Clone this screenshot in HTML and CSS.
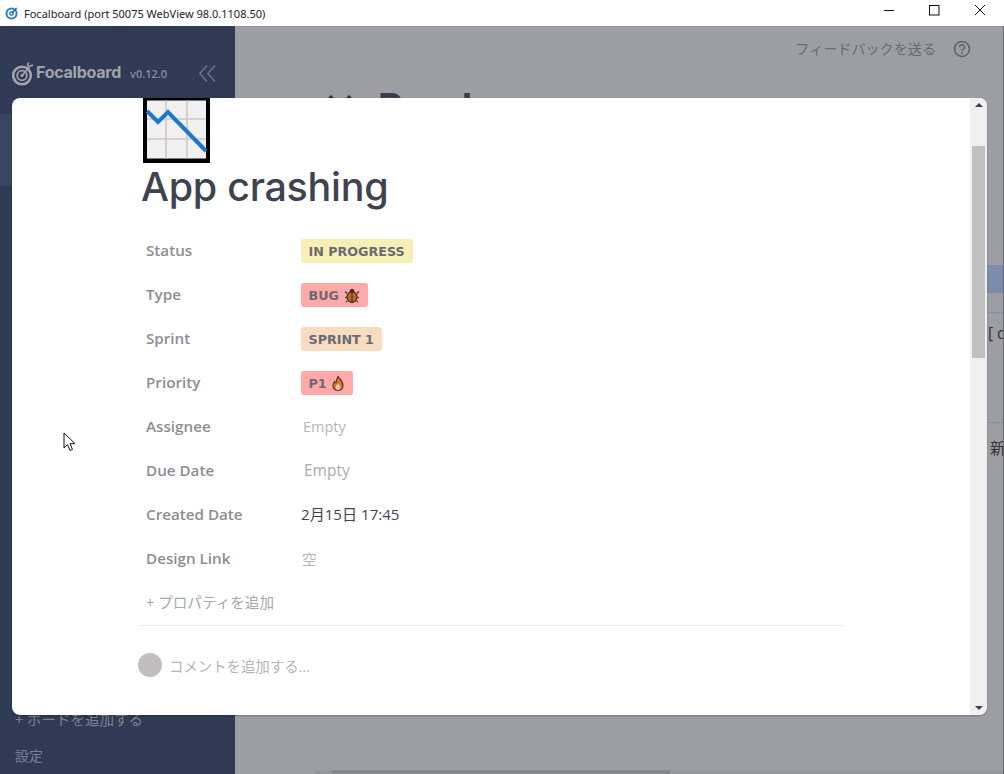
FILE: index.html
```html
<!DOCTYPE html>
<html lang="ja">
<head>
<meta charset="utf-8">
<title>Focalboard</title>
<link rel="stylesheet" href="styles.css">
</head>
<body>
<header class="titlebar">
  <svg class="app-icon" viewBox="0 0 15 15"><circle cx="7" cy="8" r="6.500" fill="#2f7fd0"/><circle cx="7" cy="8" r="4.300" fill="#fff"/><circle cx="7" cy="8" r="2.600" fill="#2f7fd0"/><circle cx="7" cy="8" r="1" fill="#fff"/><path d="M7.500 7.500 12.500 2" stroke="#1c5fa8" stroke-width="1.500"/></svg>
  <span class="title-text">Focalboard (port 50075 WebView 98.0.1108.50)</span>
  <div class="win-controls">
    <svg class="win-btn" viewBox="0 0 46 26"><path d="M18 10.500h10" stroke="#111" fill="none"/></svg>
    <svg class="win-btn" viewBox="0 0 46 26"><rect x="17.500" y="5.500" width="9.500" height="9.500" stroke="#111" fill="none"/></svg>
    <svg class="win-btn" viewBox="0 0 46 26"><path d="M17 5l10 10M27 5 17 15" stroke="#111" fill="none"/></svg>
  </div>
</header>
<div class="app">
  <aside class="sidebar">
    <div class="brand">
      <svg class="brand-icon" viewBox="0 0 21 25"><circle cx="10" cy="14.500" r="8.800" fill="none" stroke="#a3a3a7" stroke-width="2.600"/><circle cx="10" cy="14.500" r="4.800" fill="none" stroke="#a3a3a7" stroke-width="1.800"/><circle cx="10" cy="14.500" r="1.600" fill="#a3a3a7"/><path d="M10.500 14 18 5M15.500 5.500l1-4M18 5l3-1" stroke="#a3a3a7" stroke-width="1.800" fill="none"/></svg>
      <span class="brand-name">Focalboard</span>
      <span class="brand-version">v0.12.0</span>
      <svg class="collapse" viewBox="0 0 17 17"><path d="M8 .500 .8 8.500 8 16.500M16 .500 8.800 8.500 16 16.500" fill="none" stroke="#6d7282" stroke-width="1.500"/></svg>
    </div>
    <div class="side-selected"></div>
    <div class="side-footer">
      <div class="side-link add-board">+ ボードを追加する</div>
      <div class="side-link">設定</div>
    </div>
  </aside>
  <main class="content">
    <div class="topbar">
      <span class="feedback">フィードバックを送る</span>
      <svg class="help" viewBox="0 0 18 18"><circle cx="9" cy="9" r="7.500" fill="none" stroke="#5f616c" stroke-width="1.600"/><path d="M6.500 7.200a2.500 2.300 0 1 1 3.700 2c-.9.500-1.200 1-1.200 1.800" fill="none" stroke="#5f616c" stroke-width="1.500"/><circle cx="9" cy="13" r="1" fill="#5f616c"/></svg>
    </div>
    <div class="bg-head">
      <svg class="bg-icon" viewBox="0 0 32 32"><path d="M0 8 7 1l7 7 4 0 7-7 7 7v24H0z" fill="#2a2d3a"/></svg>
      <span class="bg-title">Roadmap</span>
    </div>
    <div class="bg-table">
      <div class="bg-row selected"></div>
      <div class="bg-row text-row">[ d</div>
      <div class="bg-row last-row">新</div>
    </div>
    <div class="bg-hscroll"><span class="bg-hthumb"></span></div>
  </main>
</div>
<section class="modal">
  <div class="modal-scroll">
    <div class="card">
      <svg class="card-icon" viewBox="0 0 67 65">
        <rect width="67" height="65" fill="#000"/>
        <rect x="4" y="2.500" width="59" height="58" fill="#f0f0f0"/>
        <path d="M23 2.500v58M44 2.500v58M4 21h59M4 41h59" stroke="#cfc8c8" stroke-width="1.600" fill="none"/>
        <path d="M4 13 15 24 25 14 63 53" stroke="#1b78d0" stroke-width="4" fill="none"/>
      </svg>
      <h1 class="card-title">App crashing</h1>
      <div class="props">
        <div class="prop"><span class="prop-name">Status</span><span class="badge yellow">IN PROGRESS</span></div>
        <div class="prop"><span class="prop-name">Type</span><span class="badge red">BUG
          <svg class="emoji" viewBox="0 0 16 16"><ellipse cx="8" cy="9.500" rx="5" ry="5.500" fill="#c8651d" stroke="#43302c" stroke-width="1.300"/><circle cx="8" cy="3.500" r="2.200" fill="#43302c"/><path d="M8 4v11M3 6 1 4M13 6l2-2M3 10H1M13 10h2M3.500 13 2 15M12.500 13l1.500 2" stroke="#43302c" stroke-width="1.100" fill="none"/></svg></span></div>
        <div class="prop"><span class="prop-name">Sprint</span><span class="badge peach">SPRINT 1</span></div>
        <div class="prop"><span class="prop-name">Priority</span><span class="badge red">P1
          <svg class="emoji flame" viewBox="0 0 14 16"><path d="M7 1c1 2 5 4.500 5 9a5 5 0 0 1-10 0c0-2 1-3 1.500-4 .5 1 1 1.500 1.500 1.500C5 5 6 3 7 1z" fill="#d9772e" stroke="#5a3a32" stroke-width="1.200"/><path d="M7 8c1 1.500 2.500 2.500 2.500 4a2.500 2.500 0 0 1-5 0c0-1.500 1.500-2.500 2.500-4z" fill="#f3c8a0"/></svg></span></div>
        <div class="prop"><span class="prop-name">Assignee</span><span class="empty nudge-a">Empty</span></div>
        <div class="prop"><span class="prop-name">Due Date</span><span class="empty nudge-b">Empty</span></div>
        <div class="prop"><span class="prop-name">Created Date</span><span class="value">2月15日 17:45</span></div>
        <div class="prop"><span class="prop-name">Design Link</span><span class="empty nudge-c">空</span></div>
        <div class="prop"><span class="add-prop">+ プロパティを追加</span></div>
      </div>
      <hr class="rule">
      <div class="comment"><span class="avatar"></span><span class="comment-text">コメントを追加する...</span></div>
    </div>
  </div>
  <div class="scrollbar">
    <span class="arrow up"></span>
    <span class="thumb"></span>
    <span class="arrow down"></span>
  </div>
</section>
<svg class="cursor" viewBox="0 0 14 21"><path d="M1 1v15l3.500-3.500 2.500 6 2.500-1-2.500-5.800h5z" fill="#fff" stroke="#111" stroke-width="1"/></svg>
</body>
</html>
```
FILE: styles.css
```css
* { box-sizing: border-box; }
html, body { margin: 0; height: 100%; overflow: hidden; }
body { width: 1004px; height: 774px; display: flex; flex-direction: column; font-family: "Open Sans", "Noto Sans CJK JP", sans-serif; background: #9d9ea3; }
.titlebar { height: 26px; background: #fff; display: flex; align-items: center; padding-left: 5px; flex: none; }
.app-icon { width: 14px; height: 14px; }
.title-text { margin-left: 5px; font: 11px "Noto Sans", "Open Sans", sans-serif; color: #222; }
.win-controls { margin-left: auto; display: flex; }
.win-btn { width: 46px; height: 26px; display: block; }
.app { flex: 1; display: flex; min-height: 0; }
.sidebar { width: 235px; background: #2f3a55; display: flex; flex-direction: column; flex: none; }
.brand { display: flex; align-items: center; padding: 33px 0 0 12px; height: 62px; }
.brand-icon { width: 21px; height: 25px; flex: none; }
.brand-name { margin: 0 0 3px 3px; font: 700 16px Inter, sans-serif; color: #a3a3a7; letter-spacing: -.25px; }
.brand-version { margin-left: 9px; font: 600 11px "Open Sans", sans-serif; color: #8b8e98; }
.collapse { width: 17px; height: 17px; margin-left: 32px; }
.side-selected { height: 72px; margin-top: 26px; background: #3a445e; }
.side-footer { margin-top: auto; padding: 0 0 9px 15px; display: flex; flex-direction: column; gap: 18px; }
.side-link { font-size: 14px; line-height: 18px; color: #7d818f; }
.add-board { font-size: 14.500px; }
.content { flex: 1; position: relative; padding-left: 89px; min-width: 0; overflow: hidden; border-right: 1px solid #66676d; }
.topbar { display: flex; justify-content: flex-end; align-items: center; height: 45px; gap: 17px; padding-right: 32px; }
.feedback { font-size: 14.100px; color: #686a76; margin-bottom: 2px; }
.help { width: 18px; height: 18px; }
.bg-head { display: flex; align-items: center; gap: 22px; margin-top: 12px; height: 48px; white-space: nowrap; }
.bg-icon { width: 32px; height: 32px; margin-top: 6px; }
.bg-title { font: 700 38px Inter, sans-serif; color: #3a3d4a; }
.bg-table { margin-top: 134px; padding-left: 664px; }
.bg-row { font-size: 15.500px; color: #2f3142; white-space: nowrap; }
.selected { height: 28px; background: #7b8dab; margin-left: -664px; }
.text-row { height: 111px; margin: 19px 0 0 -664px; padding: 9px 0 0 664px; border-top: 1px solid #8e8f95; border-bottom: 1px solid #8e8f95; }
.last-row { padding: 13px 0 0 2px; }
.bg-hscroll { position: absolute; left: 80px; right: 0; bottom: 0; height: 4px; background: #96979c; }
.bg-hthumb { display: block; width: 338px; height: 4px; margin-left: 17px; background: #85868c; }
.modal { position: absolute; left: 12px; top: 98px; width: 975px; height: 617px; background: #fff; border-radius: 8px; overflow: hidden; display: flex; box-shadow: 0 1px 2px rgba(0,0,0,.25); }
.modal-scroll { flex: 1; min-width: 0; overflow: hidden; padding-left: 126px; }
.card { width: 706px; }
.card-icon { display: block; width: 67px; height: 65px; margin-left: 5px; }
.card-title { margin: 0 0 0 3px; font: 500 39.500px/48px Inter, sans-serif; color: #3f4350; letter-spacing: -.3px; }
.props { margin-top: 17px; }
.prop { height: 44px; display: flex; align-items: center; padding-left: 8px; }
.prop-name { width: 155px; flex: none; font-size: 15.200px; font-weight: 600; color: #8c8d94; }
.badge { height: 24px; margin-top: 2px; border-radius: 3px; padding: 0 8px 0 7.500px; display: inline-flex; align-items: center; gap: 5px; font: 700 12.700px "DejaVu Sans", sans-serif; color: #6a6a72; }
.yellow { background: #f7f0b6; }
.red { background: #ffa9a9; }
.peach { background: #f7dcc2; }
.emoji { width: 16px; height: 17px; }
.flame { width: 14px; margin-left: -1px; }
.empty { font-size: 14.500px; color: #b3b5ba; }
.nudge-a { margin-left: 2px; }
.nudge-b { margin-left: 3px; font-size: 15.500px; font-weight: 500; color: #aaa9a9; }
.nudge-c { margin-left: 1px; }
.value { font-size: 15.100px; color: #3f4350; margin-bottom: 2px; }
.add-prop { font-size: 14.600px; color: #a5a7ab; margin-bottom: 2px; }
.rule { margin: 1px 0 0; border: 0; border-top: 1px solid #eeeeee; }
.comment { display: flex; align-items: center; gap: 7px; margin-top: 27px; }
.avatar { width: 24px; height: 24px; border-radius: 50%; background: #bfbdbe; }
.comment-text { font-size: 14.400px; color: #b3b5ba; }
.scrollbar { width: 17px; background: #f0f0f0; flex: none; display: flex; flex-direction: column; align-items: center; padding-top: 5px; }
.arrow { width: 0; height: 0; border-left: 4px solid transparent; border-right: 4px solid transparent; }
.up { border-bottom: 4px solid #3f3d56; }
.down { border-top: 4px solid #3f3d56; margin-top: auto; margin-bottom: 5px; }
.thumb { width: 13px; height: 212px; background: #c0c0c0; margin-top: 39px; }
.cursor { position: absolute; left: 63px; top: 432px; width: 14px; height: 21px; }
```
